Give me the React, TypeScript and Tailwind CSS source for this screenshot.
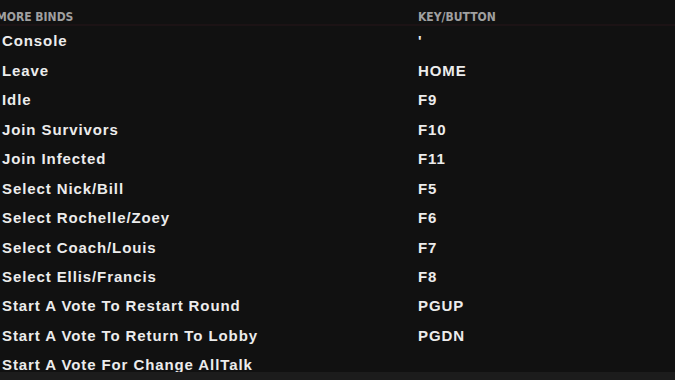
const binds: [string, string][] = [
  ['Console', "'"],
  ['Leave', 'HOME'],
  ['Idle', 'F9'],
  ['Join Survivors', 'F10'],
  ['Join Infected', 'F11'],
  ['Select Nick/Bill', 'F5'],
  ['Select Rochelle/Zoey', 'F6'],
  ['Select Coach/Louis', 'F7'],
  ['Select Ellis/Francis', 'F8'],
  ['Start A Vote To Restart Round', 'PGUP'],
  ['Start A Vote To Return To Lobby', 'PGDN'],
  ['Start A Vote For Change AllTalk', ''],
];

export default function App() {
  return (
    <div className="relative w-[675px] h-[380px] overflow-hidden bg-[#111111] flex flex-col" style={{ fontFamily: '"Liberation Sans", Arial, sans-serif' }}>
      {/* header */}
      <div
        className="h-[24px] shrink-0 grid grid-cols-[416px_1fr] items-center pt-[8px] text-[12px] font-bold text-[#a0a0a0]"
        style={{ fontFamily: '"Liberation Sans Narrow", "DejaVu Sans Condensed", sans-serif' }}
      >
        <span className="-ml-[4px]">MORE BINDS</span>
        <span className="pl-[2px]">KEY/BUTTON</span>
      </div>
      <div className="h-[2px] shrink-0 bg-[#1c1315]" />
      <div className="flex flex-col pt-[1px]">
        {binds.map(([label, key]) => (
          <div key={label} className="h-[29.45px] shrink-0 grid grid-cols-[416px_1fr] items-center text-[15px] font-bold text-[#ececec] tracking-[0.9px]">
            <span className="pl-[2px]">{label}</span>
            <span className="pl-[2px]">{key}</span>
          </div>
        ))}
      </div>
      {/* bottom bar */}
      <div className="absolute left-0 right-0 bottom-0 h-[8px] bg-[#1c1c1c]" />
    </div>
  );
}
